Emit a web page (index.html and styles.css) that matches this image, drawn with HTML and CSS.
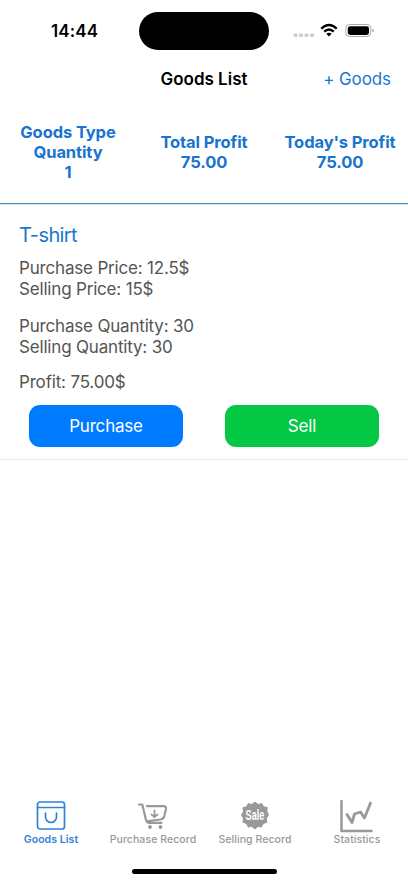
FILE: index.html
```html
<!DOCTYPE html>
<html lang="en">
<head>
<meta charset="utf-8">
<meta name="viewport" content="width=device-width, initial-scale=1">
<title>Goods List</title>
<link rel="stylesheet" href="styles.css">
</head>
<body>
<div class="screen">
  <div class="status">
    <span class="time">14:44</span>
    <span class="island"></span>
    <span class="indicators">
      <svg width="84" height="18" viewBox="0 0 84 18">
        <g fill="#ccc"><rect x="1.500" y="11.500" width="4" height="3.500" rx="1.200"/><rect x="7" y="11.500" width="4" height="3.500" rx="1.200"/><rect x="12.500" y="11.500" width="4" height="3.500" rx="1.200"/><rect x="18" y="11.500" width="4" height="3.500" rx="1.200"/></g>
        <g fill="none" stroke="#000" stroke-width="2.300"><path d="M29.300 6.600Q37 -0.600 44.700 6.600"/><path d="M32.200 9.700Q37 5.300 41.800 9.700"/></g>
        <path d="M34.300 11.700Q37 9.600 39.700 11.700L37 14.500Z"/>
        <rect x="53.800" y="2.500" width="25" height="12" rx="3.800" fill="none" stroke="#aaa"/>
        <rect x="55.800" y="4.300" width="21.200" height="8.600" rx="2.300"/>
        <path d="M80.300 6.800Q82 7.300 82 8.500T80.300 10.300Z" fill="#aaa"/>
      </svg>
    </span>
  </div>
  <header class="nav">
    <h1>Goods List</h1>
    <a class="add">+ Goods</a>
  </header>
  <section class="summary">
    <div>Goods Type<br>Quantity<br>1</div>
    <div>Total Profit<br>75.00</div>
    <div>Today's Profit<br>75.00</div>
  </section>
  <main class="list">
    <article class="item">
      <h2>T-shirt</h2>
      <p>Purchase Price: 12.5$<br>Selling Price: 15$</p>
      <p>Purchase Quantity: 30<br>Selling Quantity: 30</p>
      <p>Profit: 75.00$</p>
      <div class="actions">
        <button class="buy">Purchase</button>
        <button class="sell">Sell</button>
      </div>
    </article>
  </main>
  <nav class="tabs">
    <a class="tab active">
      <svg width="36" height="34" viewBox="0 0 36 34" fill="none" stroke="currentColor" stroke-width="1.700" stroke-linecap="round"><rect x="4.500" y="3" width="27" height="27" rx="2.500"/><path d="M4.500 8.500H31.500M12.500 14V18a5.500 5.500 0 0 0 11 0V14"/></svg>
      <span>Goods List</span>
    </a>
    <a class="tab">
      <svg width="36" height="34" viewBox="0 0 36 34" fill="none" stroke="currentColor" stroke-width="2.200" stroke-linecap="round" stroke-linejoin="round"><path d="M4 5.500H7.300L11 21Q11.700 23.800 14.500 23.800H26.500M12 7.200H28.500Q31.500 7.200 31 10L29.300 17Q28.500 20 25.700 20.500L13.500 22"/><path stroke-width="1.800" d="M19.500 11.500V17.500M16.500 15.500L19.500 18L22.500 15.500"/><g fill="currentColor" stroke="none"><circle cx="15" cy="28" r="1.900"/><circle cx="25.500" cy="28" r="1.900"/></g></svg>
      <span>Purchase Record</span>
    </a>
    <a class="tab">
      <svg width="36" height="34" viewBox="0 0 36 34"><path fill="currentColor" d="M18 2.500L21.300 5L25 4L26.800 7.200L30.800 8.300L30.300 12.300L32 16L29.800 19.500L30.300 23.500L26.500 25L24.500 28.500L21 27.700L18 30.500L14.700 27.700L11 28.500L9.200 25L5.500 23.500L6 19.500L4 16L6 12.500L5.500 8.500L9.300 7.200L11.200 4L14.800 5Z"/><text x="18" y="21" text-anchor="middle" class="sale" textLength="19" lengthAdjust="spacingAndGlyphs">Sale</text></svg>
      <span>Selling Record</span>
    </a>
    <a class="tab">
      <svg width="36" height="34" viewBox="0 0 36 34" fill="none" stroke="currentColor" stroke-linecap="round" stroke-linejoin="round"><path stroke-width="2.500" d="M2.500 2V32H32.500"/><path stroke-width="2.800" d="M8 15.500L13 23.500L15.500 15L21.500 13L25.500 19L31.500 4"/></svg>
      <span>Statistics</span>
    </a>
  </nav>
  <div class="home"></div>
</div>
</body>
</html>
```
FILE: styles.css
```css
* { box-sizing: border-box; }
body { margin: 0; background: #fff; font-family: Inter, "Liberation Sans", sans-serif; }
h1, h2, p { margin: 0; font-weight: 400; }
.screen { width: 408px; height: 883px; display: flex; flex-direction: column; overflow: hidden; }
.status { height: 52px; padding-top: 12px; display: grid; grid-template-columns: 139px 130px 139px; flex: none; }
.time { padding: 8px 0 0 51px; font-size: 17px; line-height: 22px; font-weight: 600; letter-spacing: 0.1px; }
.island { height: 38px; border-radius: 19px; background: #000; }
.indicators { padding: 10px 0 0 22.500px; }
.indicators svg { display: block; }
.nav { height: 53px; display: grid; grid-template-columns: 1fr 120px 1fr; align-items: center; flex: none; }
.nav h1 { grid-column: 2; text-align: center; font-size: 17px; font-weight: 600; letter-spacing: 0; white-space: nowrap; }
.add { justify-self: end; margin-right: 17px; font-size: 17px; color: #1878d0; letter-spacing: -0.1px; }
.summary { height: 99px; display: grid; grid-template-columns: repeat(3, 1fr); align-items: center; border-bottom: 1px solid #4590bc; box-shadow: 0 1px #d3e6f2; flex: none; text-align: center; color: #1874cf; font-size: 16.500px; line-height: 19.700px; font-weight: 700; letter-spacing: -0.1px; white-space: nowrap; padding-bottom: 2px; }
.list { flex: 1; }
.item { height: 256px; padding: 19px 19px 0; border-bottom: 1px solid #e8e8e8; display: flex; flex-direction: column; color: #555; font-size: 17px; line-height: 21px; letter-spacing: -0.18px; }
.item h2 { font-size: 20px; line-height: 24px; color: #1878d0; margin-bottom: 11px; letter-spacing: -0.6px; }
.item p { margin-bottom: 16px; }
.item p:nth-of-type(2) { margin-bottom: 14px; }
.item p:nth-of-type(3) { margin-bottom: 12px; }
.actions { display: flex; gap: 42px; padding-left: 10px; }
.actions button { width: 154px; height: 42px; padding: 0; border: 0; border-radius: 11px; color: #fff; font: inherit; letter-spacing: -0.2px; }
.buy { background: #007aff; }
.sell { background: #04c843; }
.tabs { height: 50px; display: grid; grid-template-columns: repeat(4, 1fr); flex: none; color: #999; }
.tab { display: flex; flex-direction: column; align-items: center; font-size: 10.500px; line-height: 14px; font-weight: 500; letter-spacing: 0.07px; white-space: nowrap; }
.tab svg { display: block; flex: none; }
.tab.active { color: #2f83d8; }
.tab.active span { font-weight: 600; }
.sale { fill: #fff; font: 700 14px "Liberation Sans", sans-serif; }
.home { width: 145px; height: 5px; border-radius: 3px; background: #000; margin: 20px auto 9px; flex: none; }
```
